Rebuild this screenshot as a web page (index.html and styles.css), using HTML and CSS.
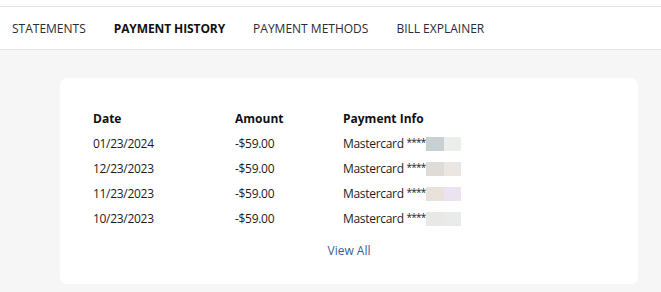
FILE: index.html
```html
<!DOCTYPE html>
<html lang="en">
<head>
  <meta charset="UTF-8">
  <title>Payment History</title>
  <link rel="stylesheet" href="styles.css">
</head>
<body>

  <!-- Tabs -->
  <nav class="tabs">
    <a href="#" class="tab">STATEMENTS</a>
    <a href="#" class="tab active">PAYMENT HISTORY</a>
    <a href="#" class="tab">PAYMENT METHODS</a>
    <a href="#" class="tab">BILL EXPLAINER</a>
  </nav>

  <!-- Payment list -->
  <main class="content">
    <div class="card">
      <div class="history">
        <div class="head">Date</div>
        <div class="head">Amount</div>
        <div class="head">Payment Info</div>

        <div>01/23/2024</div>
        <div>-$59.00</div>
        <div class="info">Mastercard <span class="stars">****</span><span class="mask"><i style="background:#c9d0d4"></i><i style="background:#eceeeb"></i></span></div>

        <div>12/23/2023</div>
        <div>-$59.00</div>
        <div class="info">Mastercard <span class="stars">****</span><span class="mask"><i style="background:#dfdbd7"></i><i style="background:#ebe6e2"></i></span></div>

        <div>11/23/2023</div>
        <div>-$59.00</div>
        <div class="info">Mastercard <span class="stars">****</span><span class="mask"><i style="background:#e9e2db"></i><i style="background:#ebe3f1"></i></span></div>

        <div>10/23/2023</div>
        <div>-$59.00</div>
        <div class="info">Mastercard <span class="stars">****</span><span class="mask"><i style="background:#e8e8e7"></i><i style="background:#e9ebea"></i></span></div>
      </div>
      <a href="#" class="view-all">View All</a>
    </div>
  </main>

</body>
</html>
```

FILE: styles.css
```css
body {
  margin: 0;
  font-family: "Open Sans", "Liberation Sans", sans-serif;
  color: #1c1c1c;
  background: #f6f6f6;
  height: 100vh;
  overflow: hidden;
}

body::before {
  content: "";
  position: absolute;
  top: 0;
  left: 0;
  right: 0;
  height: 6px;
  background: white;
}

.tabs {
  display: flex;
  gap: 28px;
  align-items: center;
  height: 42px;
  padding: 0 12px;
  margin-top: 6px;
  background: white;
  border-top: 1px solid #e4e4e4;
  border-bottom: 1px solid #e4e4e4;
}

.tab {
  font-size: 12px;
  color: #2b2b33;
  text-decoration: none;
}

.tab.active {
  font-weight: bold;
  color: #111;
  letter-spacing: -0.1px;
}

.content {
  padding: 28px 23px 0 60px;
}

.card {
  background: white;
  border-radius: 7px;
  padding: 28px 33px 21px;
  display: flex;
  flex-direction: column;
}

.history {
  display: grid;
  grid-template-columns: 142px 108px 1fr;
  grid-auto-rows: 25px;
  align-items: center;
  font-size: 12px;
  letter-spacing: -0.3px;
}

.head {
  font-weight: bold;
  color: #111;
  letter-spacing: 0;
}

.info {
  display: flex;
  align-items: center;
  white-space: pre;
}

.stars {
  font-size: 10px;
  letter-spacing: -0.8px;
  margin-top: -3px;
}

.mask {
  display: flex;
  margin-left: 1px;
}

.mask i {
  width: 17px;
  height: 14px;
}

.mask i:first-child {
  width: 18px;
}

.view-all {
  align-self: center;
  margin-top: 7px;
  line-height: 25px;
  font-size: 12px;
  color: #35638f;
  text-decoration: none;
}
```
